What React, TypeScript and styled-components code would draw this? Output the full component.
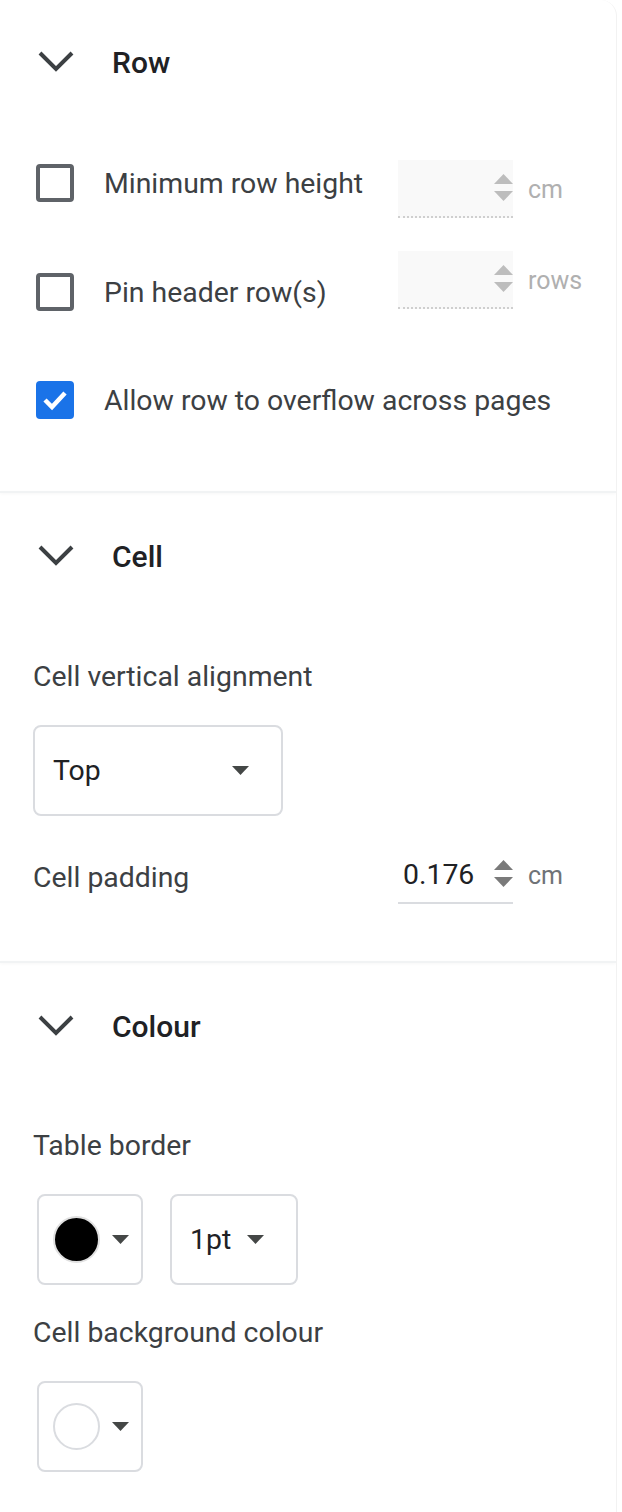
import styled, { createGlobalStyle } from "styled-components";

const GlobalStyle = createGlobalStyle`
  body {
    margin: 0;
    background: #ffffff;
    font-family: Roboto, "Liberation Sans", Arial, sans-serif;
  }
`;

const Panel = styled.div`
  width: 617px;
  min-height: 1512px;
  box-sizing: border-box;
  background: #ffffff;
  border-right: 1px solid #f2f2f2;
  border-top-right-radius: 16px;
  overflow: hidden;
`;

const Section = styled.section`
  display: flex;
  flex-direction: column;
`;

const SectionHeader = styled.div<{ $first?: boolean }>`
  display: flex;
  align-items: center;
  gap: 38px;
  height: ${(p) => (p.$first ? 124 : 126)}px;
  padding-left: 38px;
  box-sizing: border-box;
`;

const SectionTitle = styled.h2`
  margin: 0;
  font-size: 30px;
  font-weight: 500;
  color: #202124;
`;

const Divider = styled.div`
  height: 2px;
  background: #f1f3f4;
  box-shadow: 0 1px 3px rgba(0, 0, 0, 0.04);
`;

const Body = styled.div<{ $top: number; $bottom: number }>`
  display: flex;
  flex-direction: column;
  padding: ${(p) => p.$top}px 0 ${(p) => p.$bottom}px 33px;
`;

const OptionRow = styled.div<{ $gap?: number }>`
  display: flex;
  align-items: center;
  height: 58px;
  margin-top: ${(p) => p.$gap ?? 0}px;
`;

const CheckLabel = styled.label<{ $offset: number }>`
  display: flex;
  align-items: center;
  gap: 30px;
  flex: 1;
  align-self: flex-start;
  margin-top: ${(p) => p.$offset}px;
  margin-left: 3px;
  height: 38px;
  font-size: 28.4px;
  color: #3c4043;
`;

const Box = styled.span<{ $checked?: boolean }>`
  width: 38px;
  height: 38px;
  box-sizing: border-box;
  border-radius: 4px;
  border: ${(p) => (p.$checked ? "none" : "4px solid #5f6368")};
  background: ${(p) => (p.$checked ? "#1a73e8" : "transparent")};
  display: flex;
  align-items: center;
  justify-content: center;
  flex: none;
`;

const Label = styled.div<{ $gap?: number }>`
  font-size: 28.4px;
  line-height: 36px;
  color: #3c4043;
  margin-top: ${(p) => p.$gap ?? 0}px;
`;

const PlainLabel = styled(Label)`
  flex: 1;
  margin-top: 6px;
`;

const NumberBox = styled.div<{ $disabled?: boolean }>`
  width: 115px;
  height: 58px;
  box-sizing: border-box;
  display: flex;
  align-items: center;
  justify-content: space-between;
  padding: 0 0 0 5px;
  background: ${(p) => (p.$disabled ? "#f9f9f9" : "#ffffff")};
  border-bottom: ${(p) =>
    p.$disabled ? "2px dotted #cfcfcf" : "2px solid #dadce0"};
  font-size: 28.4px;
  color: #202124;
`;

const Unit = styled.span<{ $disabled?: boolean }>`
  margin-left: 15px;
  width: 88px;
  font-size: 25px;
  color: ${(p) => (p.$disabled ? "#b0b0b0" : "#6f7377")};
`;

const Dropdown = styled.div<{ $w: number }>`
  width: ${(p) => p.$w}px;
  height: 91px;
  box-sizing: border-box;
  border: 2px solid #dadce0;
  border-radius: 8px;
  display: flex;
  align-items: center;
  justify-content: space-between;
  padding: 0 32px 0 18px;
  font-size: 28.4px;
  color: #202124;
  margin-top: 30px;
`;

const SwatchButton = styled.div`
  width: 106px;
  height: 91px;
  box-sizing: border-box;
  border: 2px solid #dadce0;
  border-radius: 8px;
  display: flex;
  align-items: center;
  gap: 12px;
  padding-left: 14px;
`;

const Swatch = styled.span<{ $color: string }>`
  width: 47px;
  height: 47px;
  box-sizing: border-box;
  border-radius: 50%;
  background: ${(p) => p.$color};
  border: 2px solid ${(p) => (p.$color === "#000000" ? "#e0e0e0" : "#dadce0")};
`;

const ButtonRow = styled.div`
  display: flex;
  gap: 27px;
  margin-top: 30px;
  margin-left: 4px;
`;

const SizeButton = styled(Dropdown)`
  margin-top: 0;
  padding: 0 32px 0 18px;
`;

const Chevron = () => (
  <svg width="36" height="24" viewBox="0 0 36 24">
    <polyline
      points="2,3 18,19 34,3"
      fill="none"
      stroke="#3c4043"
      strokeWidth="4"
    />
  </svg>
);

const Caret = ({ color = "#444746" }: { color?: string }) => (
  <svg width="17" height="9" viewBox="0 0 17 9">
    <polygon points="0,0 17,0 8.5,9" fill={color} />
  </svg>
);

const Spinner = ({ disabled }: { disabled?: boolean }) => {
  const c = disabled ? "#bdbdbd" : "#7a7a7a";
  return (
    <svg width="19" height="30" viewBox="0 0 19 30">
      <polygon points="9.5,1 19,11 0,11" fill={c} />
      <polygon points="0,18 19,18 9.5,28" fill={c} />
    </svg>
  );
};

const Check = () => (
  <svg width="26" height="22" viewBox="0 0 26 22">
    <polyline
      points="3,11 10,18 23,4"
      fill="none"
      stroke="#ffffff"
      strokeWidth="4.5"
    />
  </svg>
);

export default function App() {
  return (
    <>
      <GlobalStyle />
      <Panel>
        <Section>
          <SectionHeader $first>
            <Chevron />
            <SectionTitle>Row</SectionTitle>
          </SectionHeader>
          <Body $top={36} $bottom={62}>
            <OptionRow>
              <CheckLabel $offset={4}>
                <Box />
                Minimum row height
              </CheckLabel>
              <NumberBox $disabled>
                <span />
                <Spinner disabled />
              </NumberBox>
              <Unit $disabled>cm</Unit>
            </OptionRow>
            <OptionRow $gap={33}>
              <CheckLabel $offset={22}>
                <Box />
                Pin header row(s)
              </CheckLabel>
              <NumberBox $disabled>
                <span />
                <Spinner disabled />
              </NumberBox>
              <Unit $disabled>rows</Unit>
            </OptionRow>
            <OptionRow $gap={62}>
              <CheckLabel $offset={10}>
                <Box $checked>
                  <Check />
                </Box>
                Allow row to overflow across pages
              </CheckLabel>
            </OptionRow>
          </Body>
        </Section>
        <Divider />
        <Section>
          <SectionHeader>
            <Chevron />
            <SectionTitle>Cell</SectionTitle>
          </SectionHeader>
          <Body $top={40} $bottom={57}>
            <Label>Cell vertical alignment</Label>
            <Dropdown $w={250}>
              Top
              <Caret />
            </Dropdown>
            <OptionRow $gap={30}>
              <PlainLabel>Cell padding</PlainLabel>
              <NumberBox>
                <span>0.176</span>
                <Spinner />
              </NumberBox>
              <Unit>cm</Unit>
            </OptionRow>
          </Body>
        </Section>
        <Divider />
        <Section>
          <SectionHeader>
            <Chevron />
            <SectionTitle>Colour</SectionTitle>
          </SectionHeader>
          <Body $top={39} $bottom={40}>
            <Label>Table border</Label>
            <ButtonRow>
              <SwatchButton>
                <Swatch $color="#000000" />
                <Caret />
              </SwatchButton>
              <SizeButton $w={128}>
                1pt
                <Caret />
              </SizeButton>
            </ButtonRow>
            <Label $gap={30}>Cell background colour</Label>
            <ButtonRow>
              <SwatchButton>
                <Swatch $color="#ffffff" />
                <Caret />
              </SwatchButton>
            </ButtonRow>
          </Body>
        </Section>
      </Panel>
    </>
  );
}
